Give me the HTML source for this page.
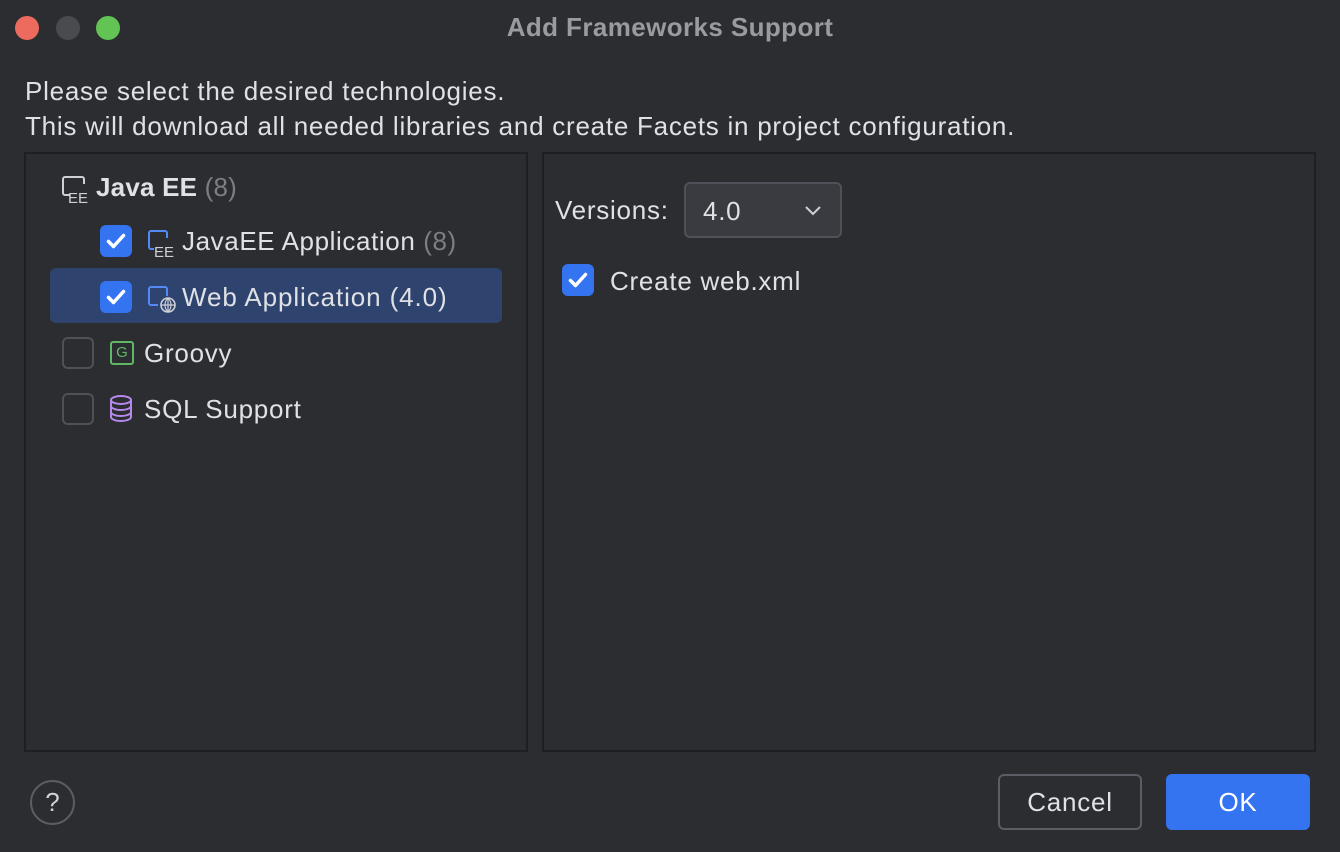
<!DOCTYPE html><html><head><style>
*{margin:0;padding:0;box-sizing:border-box}
body{width:1340px;height:852px;background:#2b2d30;font-family:"Liberation Sans",sans-serif;color:#dfe1e5;position:relative;overflow:hidden;border-radius:20px}
.a{position:absolute;white-space:nowrap}
.t{font-size:26px;letter-spacing:0.75px}
.cb{position:absolute;width:32px;height:32px;border-radius:6px}
.on{background:#3574f0}
.off{border:2px solid #4e5157}
.panel{position:absolute;border:2px solid #1e1f22}
</style></head><body>
<div class="a" style="left:15px;top:16px;width:24px;height:24px;border-radius:50%;background:#ed6a5e"></div>
<div class="a" style="left:56px;top:16px;width:24px;height:24px;border-radius:50%;background:#4a4b4e"></div>
<div class="a" style="left:96px;top:16px;width:24px;height:24px;border-radius:50%;background:#61c454"></div>
<div class="a" style="left:0;width:1340px;text-align:center;top:12px;font-size:26px;letter-spacing:0.4px;font-weight:bold;color:#9a9b9e">Add Frameworks Support</div>
<div class="a t" style="left:25px;top:76px">Please select the desired technologies.</div>
<div class="a t" style="left:25px;top:111px">This will download all needed libraries and create Facets in project configuration.</div>
<div class="panel" style="left:24px;top:152px;width:504px;height:600px"></div>
<div class="panel" style="left:542px;top:152px;width:774px;height:600px"></div>
<div class="a" style="left:50px;top:268px;width:452px;height:55px;border-radius:6px;background:#2e436e"></div>
<svg class="a" style="left:60px;top:174px" width="34" height="30"><path d="M10 21H5a2 2 0 0 1-2-2V5a2 2 0 0 1 2-2h17a2 2 0 0 1 2 2v5" fill="none" stroke="#ced0d6" stroke-width="2"/><text x="8" y="29" font-size="15" fill="#ced0d6" font-family="Liberation Sans">EE</text></svg>
<div class="a t" style="left:96px;top:172px;letter-spacing:0.2px"><b>Java EE</b> <span style="color:#7b7e85">(8)</span></div>
<div class="cb on" style="left:100px;top:225px"></div>
<svg class="a" style="left:100px;top:225px" width="32" height="32"><path d="M8.5 16.5l5 5 10-11" fill="none" stroke="#fff" stroke-width="3.5" stroke-linecap="round" stroke-linejoin="round"/></svg>
<svg class="a" style="left:146px;top:228px" width="34" height="32"><path d="M8 21H5a2 2 0 0 1-2-2V5a2 2 0 0 1 2-2h14a2 2 0 0 1 2 2v5" fill="none" stroke="#548af7" stroke-width="2"/><text x="8" y="29" font-size="15" fill="#ced0d6" font-family="Liberation Sans">EE</text></svg>
<div class="a t" style="left:182px;top:226px;letter-spacing:0.6px">JavaEE Application <span style="color:#7b7e85">(8)</span></div>
<div class="cb on" style="left:100px;top:281px"></div>
<svg class="a" style="left:100px;top:281px" width="32" height="32"><path d="M8.5 16.5l5 5 10-11" fill="none" stroke="#fff" stroke-width="3.5" stroke-linecap="round" stroke-linejoin="round"/></svg>
<svg class="a" style="left:146px;top:284px" width="34" height="32"><path d="M12 21H5a2 2 0 0 1-2-2V5a2 2 0 0 1 2-2h14a2 2 0 0 1 2 2v7" fill="none" stroke="#548af7" stroke-width="2"/><circle cx="22" cy="21" r="7" fill="none" stroke="#ced0d6" stroke-width="1.6"/><path d="M15 21h14M22 14v14M22 14c-4 4-4 10 0 14M22 14c4 4 4 10 0 14" fill="none" stroke="#ced0d6" stroke-width="1.2"/></svg>
<div class="a t" style="left:182px;top:282px;letter-spacing:0.9px">Web Application (4.0)</div>
<div class="cb off" style="left:62px;top:337px"></div>
<div class="a" style="left:110px;top:341px;width:24px;height:24px;border:2px solid #5fb865;border-radius:3px;color:#5fb865;font-size:15px;text-align:center;line-height:20px">G</div>
<div class="a t" style="left:144px;top:338px">Groovy</div>
<div class="cb off" style="left:62px;top:393px"></div>
<svg class="a" style="left:108px;top:394px" width="28" height="30"><g fill="none" stroke="#b589ec" stroke-width="2"><ellipse cx="13" cy="6" rx="10" ry="4"/><path d="M3 6v17c0 2 4 4 10 4s10-2 10-4V6M3 12c0 2 4 4 10 4s10-2 10-4M3 18c0 2 4 4 10 4s10-2 10-4"/></g></svg>
<div class="a t" style="left:144px;top:394px">SQL Support</div>
<div class="a t" style="left:555px;top:195px">Versions:</div>
<div class="a" style="left:684px;top:182px;width:158px;height:56px;border:2px solid #4e5157;border-radius:6px;background:#393b40"></div>
<div class="a t" style="left:703px;top:196px">4.0</div>
<svg class="a" style="left:804px;top:203px" width="18" height="14"><path d="M2 4l7 7 7-7" fill="none" stroke="#ced0d6" stroke-width="2"/></svg>
<div class="cb on" style="left:562px;top:264px"></div>
<svg class="a" style="left:562px;top:264px" width="32" height="32"><path d="M8.5 16.5l5 5 10-11" fill="none" stroke="#fff" stroke-width="3.5" stroke-linecap="round" stroke-linejoin="round"/></svg>
<div class="a t" style="left:610px;top:266px">Create web.xml</div>
<div class="a" style="left:30px;top:780px;width:45px;height:45px;border:2px solid #5a5d63;border-radius:50%;text-align:center;font-size:26px;line-height:41px;color:#ced0d6">?</div>
<div class="a t" style="left:998px;top:774px;width:144px;height:56px;border:2px solid #5a5d63;border-radius:6px;text-align:center;line-height:52px">Cancel</div>
<div class="a t" style="left:1166px;top:774px;width:144px;height:56px;background:#3574f0;border-radius:6px;text-align:center;line-height:56px;color:#fff">OK</div>
</body></html>
